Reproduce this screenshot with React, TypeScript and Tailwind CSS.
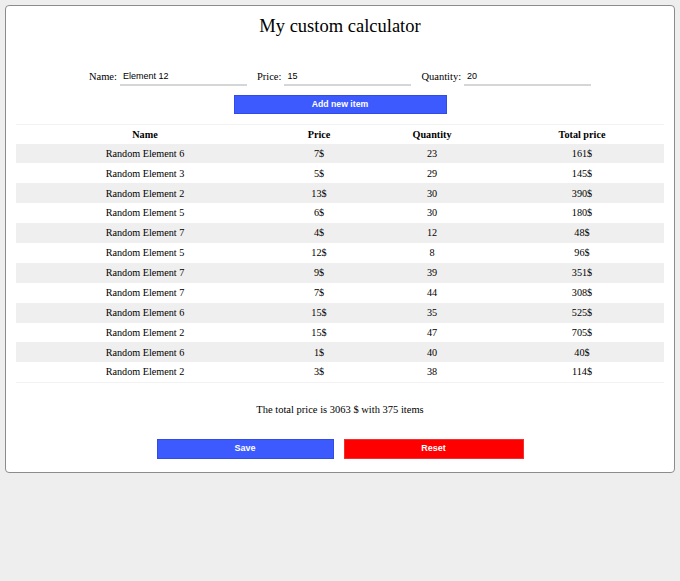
import { useState } from "react";

type Item = {
  name: string;
  price: number;
  quantity: number;
};

const initialItems: Item[] = [
  { name: "Random Element 6", price: 7, quantity: 23 },
  { name: "Random Element 3", price: 5, quantity: 29 },
  { name: "Random Element 2", price: 13, quantity: 30 },
  { name: "Random Element 5", price: 6, quantity: 30 },
  { name: "Random Element 7", price: 4, quantity: 12 },
  { name: "Random Element 5", price: 12, quantity: 8 },
  { name: "Random Element 7", price: 9, quantity: 39 },
  { name: "Random Element 7", price: 7, quantity: 44 },
  { name: "Random Element 6", price: 15, quantity: 35 },
  { name: "Random Element 2", price: 15, quantity: 47 },
  { name: "Random Element 6", price: 1, quantity: 40 },
  { name: "Random Element 2", price: 3, quantity: 38 },
];

const serif = "font-['Liberation_Serif','Times_New_Roman',serif]";
const sans = "font-['Liberation_Sans',Arial,sans-serif]";

const Field = ({
  label,
  value,
  onChange,
}: {
  label: string;
  value: string;
  onChange: (v: string) => void;
}) => (
  <label className="flex items-center gap-[3px]">
    <span className={`${serif} text-[10.5px] text-black`}>{label}</span>
    <input
      value={value}
      onChange={(e) => onChange(e.target.value)}
      className={`${sans} w-[127px] h-[18px] px-[3px] text-[9px] text-black border-b-2 border-[#d6d6d6] outline-none`}
    />
  </label>
);

export default function App() {
  const [items, setItems] = useState<Item[]>(initialItems);
  const [name, setName] = useState("Element 12");
  const [price, setPrice] = useState("15");
  const [quantity, setQuantity] = useState("20");

  const total = items.reduce((s, it) => s + it.price * it.quantity, 0);
  const count = items.reduce((s, it) => s + it.quantity, 0);

  const addItem = () => {
    const p = Number(price);
    const q = Number(quantity);
    if (!name || isNaN(p) || isNaN(q)) return;
    setItems([...items, { name, price: p, quantity: q }]);
  };

  return (
    <div className="min-h-[581px] bg-[#eeeeee] pt-[5px] px-[5px]">
      <div className="w-[670px] h-[468px] bg-white border border-[#8c8c8c] rounded-[4px] flex flex-col items-center">
        <h1 className={`${serif} text-[18.5px] leading-[24px] mt-[8px] text-black`}>
          My custom calculator
        </h1>

        <div className="flex items-center gap-[10px] mt-[30px]">
          <Field label="Name:" value={name} onChange={setName} />
          <Field label="Price:" value={price} onChange={setPrice} />
          <Field label="Quantity:" value={quantity} onChange={setQuantity} />
        </div>

        <button
          onClick={addItem}
          className={`${sans} mt-[9px] w-[213px] h-[19px] bg-[#3d5afe] border border-[#2f4de6] text-white text-[8.7px] font-bold`}
        >
          Add new item
        </button>

        <table className={`${serif} mt-[10px] w-[648px] text-[10.2px] text-black border-collapse`}>
          <thead>
            <tr className="h-[19px] border-t border-[#f2f2f2]">
              <th className="w-[258px] font-bold">Name</th>
              <th className="w-[90px] font-bold">Price</th>
              <th className="w-[136px] font-bold">Quantity</th>
              <th className="font-bold">Total price</th>
            </tr>
          </thead>
          <tbody className="border-b border-[#f2f2f2]">
            {items.map((it, i) => (
              <tr key={i} className={`h-[19.9px] ${i % 2 === 0 ? "bg-[#efefef]" : "bg-white"}`}>
                <td className="text-center">{it.name}</td>
                <td className="text-center">{it.price}$</td>
                <td className="text-center">{it.quantity}</td>
                <td className="text-center">{it.price * it.quantity}$</td>
              </tr>
            ))}
          </tbody>
        </table>

        <p className={`${serif} mt-[19px] text-[10.5px] leading-[16px] text-black`}>
          The total price is {total} $ with {count} items
        </p>

        <div className="flex gap-[10px] mt-[21px]">
          <button
            className={`${sans} w-[177px] h-[20px] bg-[#3d5afe] border border-[#2f4de6] text-white text-[9px] font-bold`}
          >
            Save
          </button>
          <button
            onClick={() => setItems([])}
            className={`${sans} w-[180px] h-[20px] bg-[#ff0000] border border-[#f03030] text-white text-[9px] font-bold`}
          >
            Reset
          </button>
        </div>
      </div>
    </div>
  );
}
